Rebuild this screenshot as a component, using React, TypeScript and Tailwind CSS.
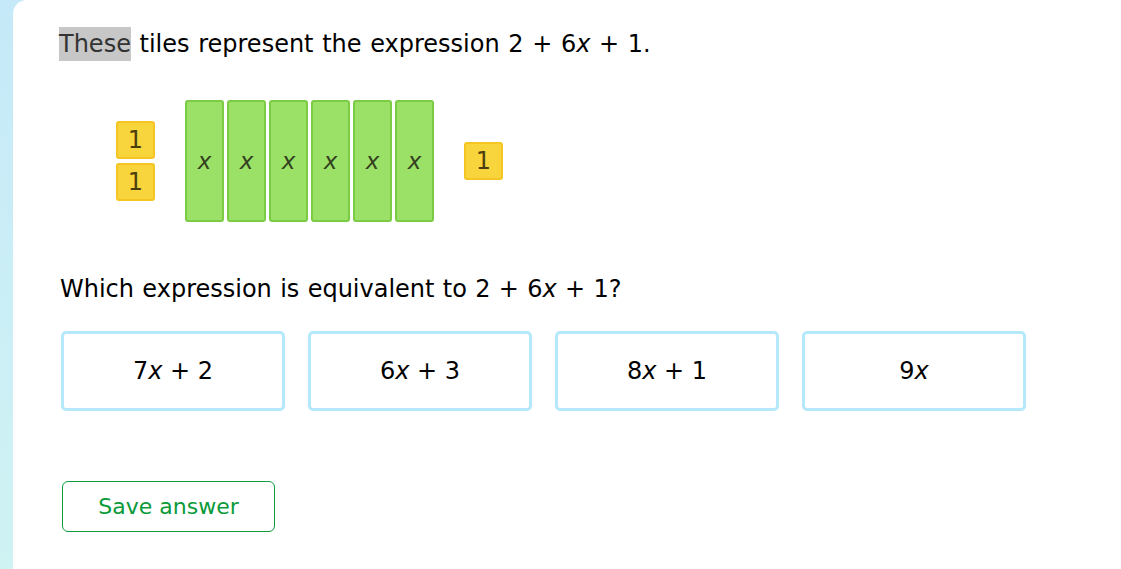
import React from 'react';

const Var: React.FC<{ children: React.ReactNode }> = ({ children }) => <span className="italic">{children}</span>;

const UnitTile: React.FC = () => (
  <div className="w-[39px] h-[38px] rounded-[3px] bg-[#f9d53d] border-2 border-[#f5c623] flex items-center justify-center text-[24px] text-[#4a3f0c]">
    1
  </div>
);

const XTile: React.FC = () => (
  <div className="w-[39px] h-[122px] rounded-[3px] bg-[#9be167] border-2 border-[#7bcb45] flex items-center justify-center text-[23px] italic text-[#33401f]">
    x
  </div>
);

const choices: { coef: string; rest?: string }[] = [
  { coef: '7', rest: ' + 2' },
  { coef: '6', rest: ' + 3' },
  { coef: '8', rest: ' + 1' },
  { coef: '9' },
];

export default function App() {
  return (
    <div className="w-[1121px] h-[569px] bg-gradient-to-b from-[#c6e9f9] to-[#cff3f3] pl-[13px] overflow-hidden" style={{ fontFamily: '"DejaVu Sans", Verdana, sans-serif' }}>
      <div className="h-full bg-white rounded-tl-[14px] pl-[46px] pt-[27px] text-[#000]">
        <p className="text-[24px] leading-[34px] [word-spacing:1px]">
          <span className="bg-[#c7c7c7] text-[#333] py-[3px]">These</span> tiles represent the expression 2 + 6<Var>x</Var> + 1.
        </p>

        <div className="flex items-center mt-[39px] ml-[57px]">
          <div className="flex flex-col gap-[4px]">
            <UnitTile />
            <UnitTile />
          </div>
          <div className="flex gap-[3px] ml-[30px]">
            {Array.from({ length: 6 }).map((_, i) => (
              <XTile key={i} />
            ))}
          </div>
          <div className="ml-[30px]">
            <UnitTile />
          </div>
        </div>

        <p className="text-[24px] leading-[34px] mt-[50px] ml-[1px] [word-spacing:0.7px]">
          Which expression is equivalent to 2 + 6<Var>x</Var> + 1?
        </p>

        <div className="flex gap-[23px] mt-[25px] ml-[2px]">
          {choices.map((c, i) => (
            <div key={i} className="w-[224px] h-[80px] border-[3px] border-[#b5e8fb] rounded-[5px] flex items-center justify-center text-[24px]">
              <span>
                {c.coef}
                <Var>x</Var>
                {c.rest}
              </span>
            </div>
          ))}
        </div>

        <button className="mt-[70px] ml-[3px] w-[213px] h-[51px] border border-[#0e9c3f] rounded-[6px] text-[22px] text-[#0a9a3a]">
          Save answer
        </button>
      </div>
    </div>
  );
}
